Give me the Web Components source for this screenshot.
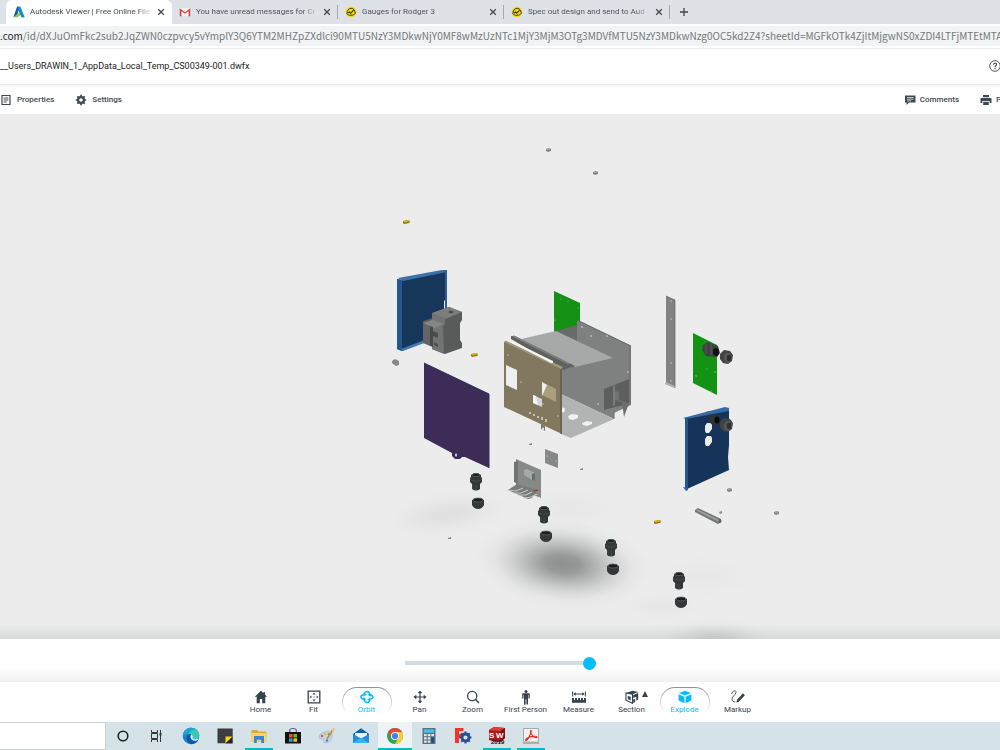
<!DOCTYPE html>
<html lang="en">
<head>
<meta charset="utf-8">
<title>Autodesk Viewer</title>
<style>
    html, body { height: 100%; margin: 0; }
    body {
        overflow: hidden;
        font-family: Roboto, "Liberation Sans", sans-serif;
        font-size: 8px;
        color: #3c4852;
        background: #fff;
    }
</style>
</head>
<body>
<viewer-app></viewer-app>

<script>
const icons = {
    autodesk: `<svg viewBox="0 0 12 12"><path d="M.5 11.200 4.200.8h2.300L4.700 8z" fill="#1f6fd0"/><path d="M4.200.8h3.400l4 10.400H8.400z" fill="#19a79b"/><path d="M4.200.8h1.600L4 8.500.5 11.200z" fill="#1a5fb4"/><path d="M.5 11.200 7 6.600l1 2.200-3.600 2.400z" fill="#8cc63f"/><path d="m6.200.8 5.400 10.400H8.800L5 3z" fill="#1689c7"/></svg>`,
    gmail: `<svg viewBox="0 0 12 12"><path d="M1 2h10v8H1z" fill="#f4f4f4"/><path d="M.8 10.300V2.200L6 6.300l5.200-4.100v8.100H9.600V5L6 7.800 2.400 5v5.300z" fill="#d93f35"/></svg>`,
    basecamp: `<svg viewBox="0 0 12 12"><circle cx="6" cy="6" r="5.400" fill="#f4dc12"/><path d="M1.800 7.800C2 4.500 3.700 2.300 6.200 2.300S10.200 4.700 10.200 7.400C9 9.700 3.200 10 1.800 7.800z" fill="none" stroke="#3a3620" stroke-width="1"/><path d="m3 7 1.500-1 1.300 1.200L8.600 4.200" fill="none" stroke="#3a3620" stroke-width="1.100"/></svg>`,
    close: `<svg viewBox="0 0 8 8"><path d="m1.200 1.200 5.600 5.600m0-5.600L1.200 6.800" stroke="#44484c" stroke-width="1.300"/></svg>`,
    plus: `<svg viewBox="0 0 10 10"><path d="M5 1v8M1 5h8" stroke="#3f4347" stroke-width="1.300"/></svg>`,
    help: `<svg viewBox="0 0 12 12"><circle cx="6" cy="6" r="5.300" fill="none" stroke="#444" stroke-width=".9"/><path d="M4.500 4.700c0-2 3.100-2 3.100-.1 0 1.200-1.600 1.200-1.600 2.600m0 .8v1.200" fill="none" stroke="#444" stroke-width="1.100"/></svg>`,
    properties: `<svg viewBox="0 0 12 12"><path d="M2 1.500h8v9H2z" fill="none" stroke="currentColor" stroke-width="1.200"/><path d="M3.700 4h4.600M3.700 6h4.600M3.700 8h3" stroke="currentColor"/></svg>`,
    gear: `<svg viewBox="0 0 12 12"><circle cx="6" cy="6" r="2.900" fill="none" stroke="currentColor" stroke-width="2.200"/><path d="M6 .8v10.400M.8 6h10.400M2.300 2.300l7.400 7.400m0-7.400L2.300 9.700" stroke="currentColor" stroke-width="1.700" stroke-dasharray="1.800 6.900"/></svg>`,
    comments: `<svg viewBox="0 0 12 12"><path d="M1 1.500h10.500v7H5L2.500 11V8.500H1z" fill="currentColor"/><path d="M3 3.500h6.500M3 5.200h6.500M3 6.900h4" stroke="#fff" stroke-width=".7"/></svg>`,
    print: `<svg viewBox="0 0 12 12"><path d="M3 1h6v2.300H3zM1.500 4h9c.7 0 1 .4 1 1v4H9.700V7H2.300v2H.5V5c0-.6.400-1 1-1z" fill="currentColor"/><path d="M3.200 7.800h5.600V11H3.200z" fill="currentColor"/></svg>`,
    home: `<svg viewBox="0 0 14 14"><path d="M7 .8.8 6.800h1.900v6.400h3.100V9h2.400v4.200h3.100V6.800h1.900L10.900 4.500V2H9.500v1.200z" fill="currentColor"/></svg>`,
    fit: `<svg viewBox="0 0 14 14"><path d="M1.200 1.200h11.600v11.600H1.200z" fill="none" stroke="currentColor" stroke-width="1.300"/><path d="m7 2.600 1.500 1.800h-3zM7 11.400 5.500 9.600h3zM2.600 7l1.800-1.500v3zM11.400 7 9.600 8.500v-3z" fill="currentColor"/><path d="M6.500 6.500h1v1h-1z" fill="currentColor"/></svg>`,
    orbit: `<svg viewBox="0 0 14 14"><g fill="none" stroke="currentColor" stroke-width="1.500"><path d="M4 3.900C5 .8 9 .6 9.800 4.600"/><path d="M10.400 4.700c3.700 1.300 3.400 3.900-.6 4.700"/><path d="M9.900 10.300c-1 3-4.800 3.200-5.700-.7"/><path d="M3.600 9.300C-.1 8-.1 5.600 3.700 4.700"/></g><path d="m7.500 4.400 4.200-.8-1.400 3.500zM10.300 7.300v4L7.200 9.700zM6.500 9.600l-4.200.8 1.400-3.500zM3.700 6.700v-4l3.100 1.600z" fill="currentColor"/></svg>`,
    pan: `<svg viewBox="0 0 14 14"><path d="M7 2v10M2 7h10" stroke="currentColor" stroke-width="1.200"/><path d="m7 .4 2.300 2.900H4.700zM7 13.600l-2.300-2.900h4.600zM.4 7l2.900-2.300v4.600zM13.600 7l-2.900 2.300V4.700z" fill="currentColor"/></svg>`,
    zoom: `<svg viewBox="0 0 14 14"><circle cx="6.200" cy="6" r="4.600" fill="none" stroke="currentColor" stroke-width="1.300"/><path d="m9.400 9.300 3.500 3.700" stroke="currentColor" stroke-width="1.500"/></svg>`,
    person: `<svg viewBox="0 0 14 14"><circle cx="7" cy="1.400" r="1.500" fill="currentColor"/><path d="M4.300 3.200h5.400c.7 0 1.100.4 1.100 1V8.600H9.500V5H9v9.500H7.400V9.200h-.8v5.300H5V5h-.5v3.600H3.200V4.200c0-.6.400-1 1.100-1z" fill="currentColor"/></svg>`,
    measure: `<svg viewBox="0 0 14 14"><path d="M.6 1.500v5M13.400 1.500v5M2 4h10" stroke="currentColor" stroke-width="1"/><path d="m1.300 4 2.400-1.700v3.400zM12.700 4l-2.400-1.700v3.400z" fill="currentColor"/><path d="M0 8h2v2h1V8h2v2h1V8h2v2h1V8h2v2h1V8h2v4.800H0z" fill="currentColor"/></svg>`,
    section: `<svg viewBox="0 0 14 14"><path d="m1 3 6.500-2.200L13.300 2 7.500 4.200z" fill="currentColor"/><path d="m1 3 6.500 1.300v9L1 10.200z" fill="none" stroke="currentColor" stroke-width="1.100"/><path d="m2.800 6 2.900.8v3.600L2.800 9zM8.200 5l5-2v6.500l-2 1V6.700L8.200 8zM8.200 9.500l2-.8V12l-2 1z" fill="currentColor"/></svg>`,
    explode: `<svg viewBox="0 0 14 14"><path d="M7 .8 13 3 7 5.600 1 3zM.6 4.200 6.400 6.700v6.600L.6 10.500zM13.400 4.200 7.600 6.700v6.600l5.800-2.800z" fill="currentColor"/></svg>`,
    markup: `<svg viewBox="0 0 14 14"><path d="M.5 4C1.500.5 5.500-.3 5 2.500S.5 6.500 1 9.500c.3 1.900 1.800 2.800 3.300 2.300" fill="none" stroke="currentColor" stroke-width=".9"/><path d="m5.300 12.700.9-3.100L12 3.300l1.900 1.900-5.700 6z" fill="currentColor"/></svg>`,
    cortana: `<svg viewBox="0 0 18 18"><circle cx="9" cy="9" r="4.800" fill="none" stroke="#1d2226" stroke-width="1.600"/></svg>`,
    taskview: `<svg viewBox="0 0 18 18"><path d="M3.500 3v2.500h6V3M3.500 15v-2.500h6V15M3.500 6.500h6v5h-6zM12.500 3v12" fill="none" stroke="#30363a" stroke-width="1"/><path d="M11.500 6h2v2.500h-2z" fill="#30363a"/></svg>`,
    edge: `<svg viewBox="0 0 18 18"><circle cx="9" cy="9" r="8.300" fill="#1584d0"/><path d="M.8 8C2 3 5.600.7 9 .7c5 0 8.300 3.300 8.300 7.500 0 2.600-1.900 4.200-4.300 4.200-1.600 0-2.800-.7-2.600-1.500.6-1.500-.2-3.700-2.700-4C5 6.600 2 7 .8 8z" fill="#39c8b1"/><path d="M.8 8C2 3 5.600.7 9 .7c2.400 0 4.500.9 5.800 2C11 1.800 8 3.500 6.800 6.800 4.500 6.400 2 7 .8 8z" fill="#1fa1d8"/><path d="M16.300 13c-3.300 1.600-8 .4-8.200-3.600 0-1.200.4-2 .8-2.300C6 7 4.200 9.200 4.600 12c.4 3 3 5.200 5.300 5.200 2.500-.1 5.200-1.800 6.400-4.200z" fill="#0c59a4"/><path d="M10.600 10.900c-.5 1.200 1.800 2 4.500 1 .9-.3.700.6 1.100.9-2.600 1.700-7 .8-7.500-2.400-.2-1.700.4-2.700.8-2.900 1.200.8 1.600 2.200 1.100 3.400z" fill="#e8f3f6"/></svg>`,
    sticky: `<svg viewBox="0 0 18 18"><path d="M1.500 1.500h15.200v8.500l-6.300 6.300H1.500z" fill="#3b3d40"/><path d="M9.500 16.500V9.600h7.200z" fill="#f5d90d"/><path d="m9.500 16.500 7.200-6.900v6.900z" fill="#202224"/></svg>`,
    folder: `<svg viewBox="0 0 18 18"><path d="M1.500 3h5.700l1.200 1.500h8v10h-15z" fill="#e7a92d"/><path d="M1.500 6h15v8.500h-15z" fill="#ffd467"/><path d="M4 9h10v7h-2.800v-3.200H6.800V16H4z" fill="#3a86cf"/></svg>`,
    store: `<svg viewBox="0 0 18 18"><path d="M5.700 6V3.500C5.700.8 12.300.8 12.300 3.500V6" fill="none" stroke="#5c646a" stroke-width="1.200"/><path d="M1 5h16v11.500H1z" fill="#101214"/><path d="M5 7h3.600v3.500H5z" fill="#ef4c2b"/><path d="M9.400 7H13v3.500H9.400z" fill="#7db700"/><path d="M5 11.300h3.600v3.500H5z" fill="#1c9fe5"/><path d="M9.400 11.300H13v3.500H9.400z" fill="#fbb80b"/></svg>`,
    paint: `<svg viewBox="0 0 18 18"><path d="M8 4.500c4-1 6.500 1 6.200 5-.3 4.300-4 7-7.400 6.300-1.800-.4-.3-2.500-1.500-3.300C4 11.700 1 12.400 1 9.900 1 7.300 4.500 5.300 8 4.500z" fill="#bcd9ec" stroke="#8bb2cd" stroke-width=".6"/><circle cx="4" cy="9" r="1.300" fill="#e2574c"/><circle cx="7.300" cy="6.800" r="1.300" fill="#f0b52c"/><circle cx="11" cy="7.300" r="1.200" fill="#50ab62"/><circle cx="9" cy="13.500" r="1.200" fill="#6d6ec7"/><path d="m9 12 5.500-8.700" stroke="#d08b3e" stroke-width="1.800"/><path d="m14 4.500 1.400-3.700 1.600.8-1.700 3.600z" fill="#eac46f"/></svg>`,
    mail: `<svg viewBox="0 0 18 18"><path d="M1 7 9 1.300 17 7v9H1z" fill="#0b62b0"/><path d="M3 6h12v6H3z" fill="#e8f5fd"/><path d="m1 7 8 4.500L17 7v9H1z" fill="#1d8ede"/><path d="m1 16 8-5.500 8 5.500z" fill="#35b4f0"/></svg>`,
    chrome: `<svg viewBox="0 0 18 18"><circle cx="9" cy="9" r="8" fill="#2fa353"/><path d="M2.100 5A8 8 0 0 1 16 5H9L5.500 11z" fill="#de4a3d"/><path d="M9 5h6.900A8 8 0 0 1 9 17l3.500-6z" fill="#fbcb2c"/><circle cx="9" cy="9" r="4" fill="#f5f5f5"/><circle cx="9" cy="9" r="3.100" fill="#447fe8"/></svg>`,
    calc: `<svg viewBox="0 0 18 18"><path d="M2.500 1h13v16h-13z" fill="#5d6f7b"/><path d="M3.800 2.300h10.400v3.500H3.800z" fill="#42c1f2"/><path d="M4 7h2.700v2.300H4zM7.700 7h2.700v2.300H7.700zM11.300 7H14v2.300h-2.700zM4 10.300h2.700v2.300H4zM7.700 10.300h2.700v2.300H7.700zM4 13.500h2.700v2.300H4zM7.700 13.500h2.700v2.300H7.700z" fill="#dce5e9"/><path d="M11.300 10.300H14v5.500h-2.700z" fill="#164f8e"/></svg>`,
    freecad: `<svg viewBox="0 0 18 18"><path d="M1 1h8.500v3.300H5v2.500h4V11H5v5H1z" fill="#f23524"/><circle cx="11.500" cy="10.500" r="3.500" fill="none" stroke="#264f96" stroke-width="2.800"/><path d="M11.500 4.500v12M5.500 10.500h12M7.300 6.300l8.400 8.400m0-8.400-8.400 8.400" stroke="#264f96" stroke-width="2" stroke-dasharray="2 8"/></svg>`,
    solidworks: `<svg viewBox="0 0 18 18"><path d="m1 3 5-3 11 1v10l-5 4.500L1 13z" fill="#b0171d"/><path d="m1 3 5-3 11 1-4.500 3z" fill="#dc3c3c"/><path d="m12.500 4 4.500-3v10l-4.500 4z" fill="#7e0e13"/><g font-family="Liberation Sans, sans-serif" font-weight="700"><text x="1" y="11" font-size="8" fill="#fff">S</text><text x="8" y="11" font-size="8" fill="#fff">W</text><text x="3" y="17" font-size="6" fill="#111">2019</text></g></svg>`,
    acrobat: `<svg viewBox="0 0 18 18"><path d="M1.500 1.500h15v15h-15z" fill="#f3f1ef" stroke="#a9a6a4"/><path d="M1 14.500h16V17H1z" fill="#b1adab"/><path d="M9 3.500c-1.600 0 .5 4.400 2.300 6 1.300 1.200 3.700 1.500 3.700.5 0-1.500-6.700-.5-9 .8-2.500 1.400-3 2.800-2 2.800C6 13.600 10.400 3.500 9 3.500z" fill="none" stroke="#df2723" stroke-width="1.100"/></svg>`
};

class UiIcon extends HTMLElement {
    constructor() {
        super();
        const shadow = this.attachShadow({ mode: 'open' });
        shadow.innerHTML = `
            <style>
                :host { display: inline-flex; flex: none; width: 12px; height: 12px; }
                svg { width: 100%; height: 100%; display: block; overflow: visible; }
            </style>
            ${icons[this.getAttribute("name")] || ""}
        `;
    }
}
customElements.define("ui-icon", UiIcon);

class BrowserTab extends HTMLElement {
    constructor() {
        super();
        const shadow = this.attachShadow({ mode: 'open' });
        shadow.innerHTML = `
            <style>
                :host {
                    display: flex;
                    align-items: center;
                    box-sizing: border-box;
                    width: 166px;
                    gap: 5px;
                    padding: 0 7px;
                    color: #50555a;
                    background: linear-gradient(#a4a8ac, #a4a8ac) right center / 1px 14px no-repeat;
                }
                :host([active]) { background: #fff; border-radius: 6px 6px 0 0; color: #45494d; }
                .title {
                    flex: 1;
                    min-width: 0;
                    overflow: hidden;
                    white-space: nowrap;
                    font: 8px/14px Roboto, sans-serif;
                    -webkit-mask-image: linear-gradient(90deg, #000 88%, transparent);
                    mask-image: linear-gradient(90deg, #000 88%, transparent);
                }
                button { display: flex; padding: 0; border: 0; background: none; }
                button ui-icon { width: 8px; height: 8px; }
            </style>
            <ui-icon name="${this.getAttribute("icon")}"></ui-icon>
            <span class="title"><slot></slot></span>
            <button aria-label="Close tab"><ui-icon name="close"></ui-icon></button>
        `;
    }
}
customElements.define("browser-tab", BrowserTab);

class BrowserChrome extends HTMLElement {
    constructor() {
        super();
        const shadow = this.attachShadow({ mode: 'open' });
        shadow.innerHTML = `
            <style>
                :host { display: block; flex: none; background: #fff; border-bottom: 1px solid #eceded; }
                .tabs { display: flex; height: 24px; padding-left: 6px; background: #dee1e6; }
                .new { display: flex; align-items: center; padding: 0 9px; border: 0; background: none; }
                .new ui-icon { width: 10px; height: 10px; }
                .address {
                    display: flex;
                    align-items: center;
                    height: 20px;
                    margin: 2px 0;
                    background: #f1f3f4;
                    font: 10px/20px "Noto Sans CJK SC", sans-serif;
                    color: #222;
                }
                input {
                    flex: 1;
                    min-width: 0;
                    height: 20px;
                    padding: 0;
                    border: 0;
                    outline: 0;
                    background: none;
                    font: inherit;
                    color: #74777a;
                }
            </style>
            <div class="tabs">
                <browser-tab icon="autodesk" active>Autodesk Viewer | Free Online File</browser-tab>
                <browser-tab icon="gmail">You have unread messages for Cr</browser-tab>
                <browser-tab icon="basecamp">Gauges for Rodger 3</browser-tab>
                <browser-tab icon="basecamp">Spec out design and send to Aud</browser-tab>
                <button class="new" aria-label="New tab"><ui-icon name="plus"></ui-icon></button>
            </div>
            <div class="address">
                <label for="url">.com</label>
                <input id="url" spellcheck="false" value="/id/dXJuOmFkc2sub2JqZWN0czpvcy5vYmplY3Q6YTM2MHZpZXdlci90MTU5NzY3MDkwNjY0MF8wMzUzNTc1MjY3MjM3OTg3MDVfMTU5NzY3MDkwNzg0OC5kd2Z4?sheetId=MGFkOTk4ZjItMjgwNS0xZDI4LTFjMTEtMTAzYTkxY2JkZ">
            </div>
        `;
    }
}
customElements.define("browser-chrome", BrowserChrome);

class ViewerHeader extends HTMLElement {
    constructor() {
        super();
        const shadow = this.attachShadow({ mode: 'open' });
        shadow.innerHTML = `
            <style>
                :host { display: block; flex: none; }
                header, nav { display: flex; align-items: center; overflow: hidden; }
                header {
                    box-sizing: border-box;
                    height: 36px;
                    padding-bottom: 1px;
                    border-bottom: 1px solid #e6e7e7;
                }
                h1 { flex: 1; margin: 0; font-size: 9px; line-height: 12px; font-weight: 400; color: #222; }
                nav {
                    height: 29px;
                    gap: 21px;
                    background: linear-gradient(#f7f7f7, #fff 4px);
                }
                button {
                    display: flex;
                    align-items: center;
                    flex: none;
                    gap: 5px;
                    padding: 0;
                    border: 0;
                    background: none;
                    font: 500 8px/12px Roboto, sans-serif;
                    color: #3c4852;
                }
                .help { width: 11px; }
                .comments { margin-left: auto; gap: 4px; }
                .print { width: 20px; gap: 4px; }
            </style>
            <header>
                <h1>__Users_DRAWIN_1_AppData_Local_Temp_CS00349-001.dwfx</h1>
                <button class="help" aria-label="Help"><ui-icon name="help"></ui-icon></button>
            </header>
            <nav>
                <button><ui-icon name="properties"></ui-icon>Properties</button>
                <button><ui-icon name="gear"></ui-icon>Settings</button>
                <button class="comments"><ui-icon name="comments"></ui-icon>Comments</button>
                <button class="print"><ui-icon name="print"></ui-icon>Print</button>
            </nav>
        `;
    }
}
customElements.define("viewer-header", ViewerHeader);

class ModelCanvas extends HTMLElement {
    constructor() {
        super();
        const shadow = this.attachShadow({ mode: 'open' });

        // each cable gland: a threaded body with its lock nut below
        const glands = [[476, 482], [544, 515], [611, 548], [679, 581]]
            .map(([x, y]) => `<use href="#gland" x="${x}" y="${y}"/>`).join("");

        shadow.innerHTML = `
            <style>
                :host { display: block; flex: 1; min-height: 0; background: #ececec; }
                svg { width: 100%; height: 100%; display: block; }
            </style>
            <svg viewBox="0 114 1000 525" preserveAspectRatio="xMidYMid slice" role="img" aria-label="Exploded enclosure model">
                <defs>
                    <radialGradient id="shade">
                        <stop offset="0" stop-color="#7d807e" stop-opacity=".86"/>
                        <stop offset=".2" stop-color="#808382" stop-opacity=".78"/>
                        <stop offset=".4" stop-color="#8a8d8c" stop-opacity=".55"/>
                        <stop offset=".6" stop-color="#969998" stop-opacity=".3"/>
                        <stop offset=".8" stop-color="#a5a8a7" stop-opacity=".09"/>
                        <stop offset="1" stop-color="#b0b0b0" stop-opacity="0"/>
                    </radialGradient>
                    <linearGradient id="floor" x2="0" y2="1">
                        <stop offset="0" stop-color="#d8d9d9" stop-opacity="0"/>
                        <stop offset="1" stop-color="#d8d9d9"/>
                    </linearGradient>
                    <g id="gland">
                        <path d="M-5-7Q0-11 5-7V-5L6-4V0L4 2V7Q0 10-4 7V2L-6 0V-4L-5-5z" fill="#343737"/>
                        <ellipse cy="-7" rx="4" ry="1.600" fill="#1b1d1d" stroke="#5c6160" stroke-width=".8"/>
                        <path d="M-5.500-2.500Q0 1 5.500-2.500M-3 2V7M0 3V8" fill="none" stroke="#505655" stroke-width=".7"/>
                        <path d="M-4 18Q2 14 8 18V23Q6 27 2 27T-4 23z" fill="#353838"/>
                        <ellipse cx="2" cy="18" rx="5" ry="2" fill="#1c1e1e" stroke="#606463" stroke-width=".8"/>
                    </g>
                    <g id="nut">
                        <path d="m-6-3 4-4 6 1 3 4-1 6-4 3-5-1-3-4z" fill="#414343"/>
                        <ellipse cx="2" cy="1" rx="4" ry="5" fill="#565858"/>
                        <ellipse cx="3" cy="1" rx="2.300" ry="3.300" fill="#2d2f2f"/>
                    </g>
                    <g id="pin">
                        <path d="m-3-1 6-1 1 2-1 1-5 1-1-1z" fill="#8a7114"/>
                        <path d="m-3-1 6-1 .5 1.500-5 1z" fill="#d4b522"/>
                    </g>
                    <g id="screw">
                        <path d="m-2-1 3-1 2 1v2l-3 1-2-1z" fill="#858786"/>
                        <path d="m-2-1 3-1 2 1-3 1z" fill="#a6a8a7"/>
                    </g>
                </defs>

                <ellipse cx="448" cy="514" rx="75" ry="26" fill="url(#shade)" opacity=".13" transform="rotate(-8 448 514)"/>
                <ellipse cx="570" cy="508" rx="65" ry="28" fill="url(#shade)" opacity=".05"/>
                <ellipse cx="563" cy="564" rx="88" ry="44" fill="url(#shade)" transform="rotate(6 563 564)"/>
                <ellipse cx="705" cy="576" rx="65" ry="26" fill="url(#shade)" opacity=".05"/>
                <ellipse cx="662" cy="606" rx="50" ry="18" fill="url(#shade)" opacity=".06"/>
                <path d="M0 624h1000v15H0z" fill="url(#floor)"/>
                <ellipse cx="715" cy="639" rx="65" ry="22" fill="url(#shade)" opacity=".24"/>

                <!-- left cover and breaker -->
                <path d="m397 279 5 1 45-10v63l-45 18-5-2z" fill="#17375a"/>
                <path d="m397 279 5 1v71l-5-2z" fill="#23588f"/>
                <path d="m398 278 44-8 5 0v2l-44 9z" fill="#3c70a8"/>
                <path d="m445 271 2-1v41l-2-1z" fill="#2c5d96"/>
                <path d="m401 349 26-10v3l-24 9z" fill="#4479b5"/>
                <path d="m444 301 1-1v10h-1z" fill="#dfe7ee"/>
                <path d="m432 313 17-6 13 5v8l-2 3v17l2 3v5l-17 6-13-5v-4l-9-3v-21l9-3z" fill="#595b5b"/>
                <path d="m432 313 17-6 13 5-17 7z" fill="#7c7e7e"/>
                <path d="m432 313 13 6v5l-2 2 1 28-12-5z" fill="#727474"/>
                <path d="m423 323 9-3 12 4-12 5z" fill="#858787"/>
                <path d="m423 323 7 3v20l-7-3z" fill="#636565"/>
                <path d="m430 326 3 1v20l-3-1z" fill="#484a4a"/>
                <path d="m433 331 5 2v5l-5-2zM434 342l4 2v3l-4-2z" fill="#4c4e4e"/>
                <ellipse cx="451" cy="312" rx="2.500" ry="1.200" fill="#47494a"/>

                <!-- back plate -->
                <path d="m424 363 65 31v74l-24-11h-3l-2 2h-4l-4-6-28-15z" fill="#3d2b58"/>
                <path d="M452 452v4l3 3h3l2-3z" fill="#3d2b58"/>
                <path d="m424 363 65 31v74" fill="none" stroke="#2e3354" stroke-width="1"/>
                <ellipse cx="456" cy="455" rx="1" ry="1.800" fill="#d5d3dc"/>

                <!-- enclosure -->
                <path d="m554 291 26 12v29h-3l-23 0z" fill="#149114"/>
                <g fill="#8fc28f"><circle cx="561" cy="299" r=".6"/><circle cx="568" cy="301" r=".6"/><circle cx="555" cy="320" r=".6"/><circle cx="578" cy="308" r=".6"/></g>
                <path d="m556 331 21-6 3 20-10 0z" fill="#696b6b"/>
                <path d="m577 320 54 26v59l-17 8v6l-53-25v-28l16-8z" fill="#7e8180"/>
                <path d="m577 320 54 26" stroke="#626564" stroke-width="1"/>
                <path d="M630 346v58" stroke="#686b6a" stroke-width="1"/>
                <g fill="#dcdddd"><circle cx="582" cy="327" r=".8"/><circle cx="591" cy="336" r=".8"/><circle cx="607" cy="336" r=".8"/><circle cx="628" cy="372" r=".8"/><circle cx="598" cy="404" r=".8"/></g>
                <path d="m561 394 53 25-43 19-10-4z" fill="#b2b4b3"/>
                <path d="M614 410v9" stroke="#6f7271"/>
                <g fill="#f1f1f1"><path d="m568 416 4-2 6 1v3l-5 2-4-1zM582 423l5-2 5 1v2l-5 2-4-1z"/><ellipse cx="563" cy="410" rx="2" ry="2.400"/></g>
                <path d="m521 339 35-8 57 27-38 9z" fill="#a7a9a8"/>
                <path d="m511 336 4 0 60 30-7 2-4 2-53-31z" fill="#5e615f"/>
                <path d="m513 336 56 28" stroke="#7e817f" stroke-width="1.500"/>
                <path d="m604 389 25-10v25l-10 2-15 4z" fill="#5c5f5e"/>
                <path d="m613 386 2-1v20l-2 1z" fill="#7b7e7d"/>
                <path d="m615 391 4 1v8l12 4-7-1-9-3z" fill="#707372"/>
                <path d="m622 403 7 0-5 14z" fill="#6c6f6e"/>
                <path d="m541 424 4 2v5l-4-2z" fill="#737673"/>
                <ellipse cx="543" cy="429" rx="1" ry="1.400" fill="#eee"/>
                <path d="m504 342 2-1 56 26v67l-58-27z" fill="#81785f"/>
                <path d="m504 342 2-1 57 26-2 2z" fill="#a1977a"/>
                <path d="m510 342 2-1 41 20v2h-2z" fill="#f5f5f3"/>
                <path d="M561 369v65" stroke="#55503f"/>
                <path d="m506 365 11 5v20l-11-5z" fill="#efefef"/>
                <path d="m542 382 14 7v13l-14-7z" fill="#aaa07d"/>
                <path d="m542 382 5 3-5 11z" fill="#efefef"/>
                <path d="m533 395 9 4v8l-9-4z" fill="#d3d5d4"/>
                <path d="m533 395 3 1 2 9-5-2z" fill="#f3f3f3"/>
                <path d="M530 412v2M534 414v2M538 416v2M542 417v3M546 419v3" stroke="#dad7cd" stroke-width="1.500"/>
                <g fill="#d6d2c5"><circle cx="508" cy="355" r=".7"/><circle cx="521" cy="382" r=".7"/><circle cx="543" cy="404" r=".7"/><circle cx="558" cy="416" r=".7"/></g>

                <!-- terminal board and small plate -->
                <path d="m516 459 25 11v28l-25-10z" fill="#858988"/>
                <path d="m514 462 4-1v23l-4-2z" fill="#6f7371"/>
                <path d="m524 470 3-1 8 4v8l-3-1-8-5z" fill="#a5a8a7"/>
                <path d="m532 474 3-1v8l-3-1z" fill="#686c6a"/>
                <path d="m508 490 9-6 20 6-5 8-4 1z" fill="#777b79"/>
                <path d="m508 490 8 1 7-3M513 493l8 0 7-3M518 495l8 0 6-3M524 498l7-1 6-3" fill="none" stroke="#c2c5c4" stroke-width="1.200"/>
                <path d="m534 491 4-1" stroke="#a42b20" stroke-width="1.200"/>
                <path d="m545 449 13 5v14l-13-5z" fill="#848987"/>
                <circle cx="547" cy="456" r=".6" fill="#e4e4e4"/><circle cx="556" cy="461" r=".6" fill="#e4e4e4"/>

                <!-- rail, green board and right cover -->
                <path d="m666 296 9 4v88l-9-4z" fill="#808382"/>
                <path d="m666 296 9 4v88" fill="none" stroke="#5f6261" stroke-width=".7"/>
                <path d="m665 384 10 4v-2l-9-4z" fill="#aaacab"/>
                <g fill="#d5d5d5"><circle cx="671" cy="301" r=".7"/><circle cx="671" cy="319" r=".7"/><circle cx="671" cy="363" r=".7"/><circle cx="671" cy="381" r=".7"/></g>
                <path d="m693 333 24 12v50l-24-12z" fill="#139213"/>
                <g fill="#9bd09b"><circle cx="696" cy="376" r=".7"/><circle cx="707" cy="369" r=".6"/><circle cx="715" cy="372" r=".7"/><circle cx="711" cy="391" r=".6"/></g>
                <path d="m703 345 5-3 10 4 2 7-3 4-11-1-4-6z" fill="#3f4242"/>
                <path d="M706 344v10M711 344v11" stroke="#606463" stroke-width=".8"/>
                <ellipse cx="716" cy="352" rx="3" ry="4" fill="#111313"/>
                <use href="#nut" x="726" y="357"/>
                <path d="m705 412 5-1 5 1v4h-8z" fill="#7d8181"/>
                <path d="m686 418 43-9v36l-1 12 1 13-42 19z" fill="#16345a"/>
                <path d="m683 418 42-11 4 1v3l-43 8z" fill="#366ba2"/>
                <path d="m685 418 3 0v71l-3-1z" fill="#24578a"/>
                <path d="m683 487 5 1v2l-2 1z" fill="#2e69a5"/>
                <path d="m705 426 2-3h4l1 2v4l-3 4h-3l-1-2zM705 439l2-3h4l1 2v4l-3 4h-3l-1-2z" fill="#ececec"/>
                <path d="m709 416 5-2 5 2v8l-4 2-5-3z" fill="#303333"/>
                <ellipse cx="717" cy="420" rx="2.500" ry="3.500" fill="#090a0a"/>
                <use href="#nut" x="726" y="425"/>

                <path d="m695 510 3-2 23 11 0 3-3 2-23-12z" fill="#747776"/>
                <path d="m697 510 22 11" stroke="#9fa2a1" stroke-width="1.500"/>
                <ellipse cx="720" cy="521" rx="1.500" ry="2" fill="#5f6262"/>

                ${glands}
                <use href="#pin" x="406" y="222"/>
                <use href="#pin" x="474" y="355"/>
                <use href="#pin" x="657" y="522"/>
                <use href="#screw" x="548" y="150"/>
                <use href="#screw" x="595" y="173"/>
                <path d="m392 361 3-2 4 2v4l-3 1-4-3z" fill="#858887"/>
                <use href="#screw" x="729" y="490"/>
                <use href="#screw" x="776" y="513"/>
                <path d="m529 444 3-1v2h-3zM580 469l3-1v2h-3zM448 538l3-1v2h-3zM719 512l3-1v2l-2 1z" fill="#868987"/>
            </svg>
        `;
    }
}
customElements.define("model-canvas", ModelCanvas);

class ExplodeSlider extends HTMLElement {
    constructor() {
        super();
        const shadow = this.attachShadow({ mode: 'open' });
        shadow.innerHTML = `
            <style>
                :host {
                    display: flex;
                    flex: none;
                    align-items: center;
                    justify-content: center;
                    box-sizing: border-box;
                    height: 43px;
                    padding-top: 5px;
                    background: linear-gradient(#fff 28px, #f1f1f1);
                }
                input {
                    -webkit-appearance: none;
                    appearance: none;
                    width: 191px;
                    height: 13px;
                    margin: 0;
                    border-radius: 2px;
                    background: linear-gradient(#d3dce2, #d3dce2) center / 100% 4px no-repeat;
                }
                input::-webkit-slider-thumb {
                    -webkit-appearance: none;
                    width: 13px;
                    height: 13px;
                    border: 0;
                    border-radius: 50%;
                    background: #06bcfb;
                }
            </style>
            <input type="range" min="0" max="100" value="100" aria-label="Explode amount">
        `;
    }
}
customElements.define("explode-slider", ExplodeSlider);

class ToolButton extends HTMLElement {
    constructor() {
        super();
        const shadow = this.attachShadow({ mode: 'open' });
        shadow.innerHTML = `
            <style>
                :host { display: flex; width: 53px; justify-content: center; }
                button {
                    position: relative;
                    display: flex;
                    flex-direction: column;
                    align-items: center;
                    width: 50px;
                    height: 30px;
                    gap: 1px;
                    padding: 2px 0 0;
                    border: 1px solid transparent;
                    border-radius: 15px;
                    background: none;
                    font: 400 8px/10px Roboto, sans-serif;
                    color: #36424c;
                    white-space: nowrap;
                }
                :host([active]) button {
                    color: #06bcfb;
                    background: linear-gradient(#fff, #fff) padding-box, linear-gradient(#8d9296, #fff 85%) border-box;
                }
                ui-icon { width: 14px; height: 14px; }
                .caret { display: none; }
                :host([menu]) .caret {
                    display: block;
                    position: absolute;
                    top: 3px;
                    right: 8px;
                    border: 3px solid transparent;
                    border-top: 0;
                    border-bottom: 6px solid #36424c;
                }
            </style>
            <button><ui-icon name="${this.getAttribute("icon")}"></ui-icon><span><slot></slot></span><i class="caret"></i></button>
        `;
    }
}
customElements.define("tool-button", ToolButton);

class ViewerTools extends HTMLElement {
    constructor() {
        super();
        const shadow = this.attachShadow({ mode: 'open' });
        shadow.innerHTML = `
            <style>
                :host {
                    display: flex;
                    flex: none;
                    align-items: center;
                    justify-content: center;
                    height: 40px;
                    padding-right: 2px;
                    background: #fff;
                }
            </style>
            <tool-button icon="home">Home</tool-button>
            <tool-button icon="fit">Fit</tool-button>
            <tool-button icon="orbit" active>Orbit</tool-button>
            <tool-button icon="pan">Pan</tool-button>
            <tool-button icon="zoom">Zoom</tool-button>
            <tool-button icon="person">First Person</tool-button>
            <tool-button icon="measure">Measure</tool-button>
            <tool-button icon="section" menu>Section</tool-button>
            <tool-button icon="explode" active>Explode</tool-button>
            <tool-button icon="markup">Markup</tool-button>
        `;
    }
}
customElements.define("viewer-tools", ViewerTools);

class TaskBar extends HTMLElement {
    constructor() {
        super();
        const shadow = this.attachShadow({ mode: 'open' });

        const apps = [
            ["cortana", "Cortana"],
            ["taskview", "Task View"],
            ["edge", "Edge"],
            ["sticky", "Sticky Notes"],
            ["folder", "File Explorer", "open"],
            ["store", "Store"],
            ["paint", "Paint"],
            ["mail", "Mail"],
            ["chrome", "Chrome", "open current"],
            ["calc", "Calculator"],
            ["freecad", "FreeCAD"],
            ["solidworks", "SolidWorks", "open"],
            ["acrobat", "Acrobat", "open"],
        ];

        shadow.innerHTML = `
            <style>
                :host { display: flex; flex: none; height: 28px; background: #d5e2e8; }
                input {
                    box-sizing: border-box;
                    width: 106px;
                    height: 28px;
                    padding: 0 8px;
                    border: 1px solid #cdd0d1;
                    border-left: 0;
                    border-radius: 0;
                    background: #fff;
                }
                button {
                    display: flex;
                    align-items: center;
                    justify-content: center;
                    width: 34px;
                    padding: 0;
                    border: 0;
                    background: none;
                }
                .open { background: linear-gradient(#06b7c4, #06b7c4) center bottom / 28px 2px no-repeat; }
                .current { background: linear-gradient(#06b7c4, #06b7c4) center bottom / 100% 2px no-repeat #eef4f6; }
                ui-icon { width: 18px; height: 18px; }
            </style>
            <input type="search" aria-label="Search">
            ${apps.map(([icon, label, state]) => `<button class="${state || ""}" aria-label="${label}"><ui-icon name="${icon}"></ui-icon></button>`).join("")}
        `;
    }
}
customElements.define("task-bar", TaskBar);

class ViewerApp extends HTMLElement {
    constructor() {
        super();
        const shadow = this.attachShadow({ mode: 'open' });
        shadow.innerHTML = `
            <style>
                :host { display: flex; flex-direction: column; height: 100vh; }
            </style>
            <browser-chrome></browser-chrome>
            <viewer-header></viewer-header>
            <model-canvas></model-canvas>
            <explode-slider></explode-slider>
            <viewer-tools></viewer-tools>
            <task-bar></task-bar>
        `;
    }
}
customElements.define("viewer-app", ViewerApp);
</script>
</body>
</html>
